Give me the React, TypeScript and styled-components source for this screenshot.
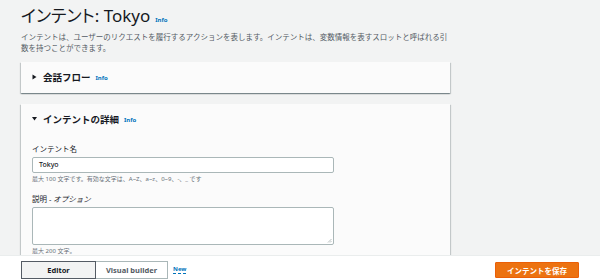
import React from 'react';
import styled, {createGlobalStyle} from 'styled-components';

const GlobalStyle = createGlobalStyle`
    html, body {
        margin: 0;
        padding: 0;
        background: #f2f3f3;
    }
    body {
        font-family: "Noto Sans", "Noto Sans CJK JP", sans-serif;
        color: #16191f;
    }
`;

const Screen = styled.div`
    width: 600px;
    height: 280px;
    display: flex;
    flex-direction: column;
    overflow: hidden;
`;

const Main = styled.div`
    flex: 1;
    overflow: hidden;
    padding: 5px 0 0 21px;
`;

const Column = styled.div`
    width: 429px;
`;

const TitleRow = styled.div`
    display: flex;
    align-items: baseline;
    gap: 5px;
    height: 22px;
`;

const Title = styled.h1`
    margin: 0;
    font-size: 17px;
    line-height: 22px;
    font-weight: 400;
    color: #16191f;
    font-feature-settings: "palt";
`;

const Info = styled.a`
    font-size: 6px;
    font-weight: 700;
    color: #0073bb;
    text-decoration: none;
`;

const Description = styled.p`
    margin: 5px 0 0;
    font-size: 7.5px;
    line-height: 11px;
    color: #545b64;
`;

const Panel = styled.section<{ $open?: boolean }>`
    margin-top: ${p => (p.$open ? 11 : 8)}px;
    background: #fbfbfb;
    box-shadow: 0 1px 1px 0 rgba(0, 28, 36, 0.3), 1px 1px 1px 0 rgba(0, 28, 36, 0.15), -1px 1px 1px 0 rgba(0, 28, 36, 0.15);
    padding-bottom: ${p => (p.$open ? 20 : 0)}px;
`;

const PanelHeader = styled.div`
    display: flex;
    align-items: center;
    gap: 5px;
    height: 31px;
    padding: 0 0 1px 11px;
    box-sizing: border-box;
`;

const Caret = styled.svg`
    width: 5px;
    height: 6px;
    margin-right: 1px;
`;

const PanelTitle = styled.h2`
    margin: 0;
    font-size: 9.5px;
    line-height: 11px;
    font-weight: 700;
`;

const HeaderInfo = styled(Info)`
    margin-top: 2px;
`;

const PanelBody = styled.div`
    padding: 9px 0 0 11px;
`;

const Label = styled.label`
    display: block;
    font-size: 7.5px;
    line-height: 10px;
    color: #16191f;

    & > i {
        font-style: italic;
    }
`;

const TextInput = styled.div`
    margin-top: 3px;
    width: 302px;
    height: 16px;
    box-sizing: border-box;
    border: 1px solid #aab7b8;
    border-radius: 2px;
    background: #fff;
    padding: 0 6px;
    font-size: 7px;
    line-height: 14px;
    font-weight: 500;
`;

const TextArea = styled.div`
    position: relative;
    margin-top: 3px;
    width: 302px;
    height: 38px;
    box-sizing: border-box;
    border: 1px solid #aab7b8;
    border-radius: 2px;
    background: #fff;
`;

const Grip = styled.svg`
    position: absolute;
    right: 1px;
    bottom: 1px;
    width: 5px;
    height: 5px;
`;

const Hint = styled.div<{ $gap?: number }>`
    margin-top: 2px;
    margin-bottom: ${p => p.$gap ?? 0}px;
    font-size: 6px;
    line-height: 8px;
    color: #687078;
`;

const Footer = styled.footer`
    height: 25px;
    flex-shrink: 0;
    background: #fff;
    border-top: 1px solid #eaeded;
    box-sizing: border-box;
    display: flex;
    align-items: flex-start;
    padding: 5px 21px 0 21px;
`;

const Segment = styled.div`
    display: flex;
`;

const SegButton = styled.button<{ $active?: boolean }>`
    height: 18px;
    width: ${p => (p.$active ? 75 : 72)}px;
    box-sizing: border-box;
    margin: 0;
    padding: 0;
    font-family: inherit;
    font-size: 7.5px;
    font-weight: 700;
    color: ${p => (p.$active ? '#16191f' : '#545b64')};
    background: ${p => (p.$active ? '#f2f3f3' : '#fff')};
    border: ${p => (p.$active ? '1.5px solid #545b64' : '1px solid #aab7b8')};
    border-left-width: ${p => (p.$active ? 1.5 : 0)}px;
`;

const NewTag = styled.span`
    margin: 5px 0 0 5px;
    font-size: 6px;
    font-weight: 700;
    color: #0073bb;
    border-bottom: 1px dashed #0073bb;
    line-height: 7px;
`;

const Spacer = styled.div`
    flex: 1;
`;

const SaveButton = styled.button`
    margin: 1px 0 0;
    height: 16px;
    width: 84px;
    padding: 0;
    font-family: inherit;
    font-size: 7.5px;
    font-weight: 700;
    color: #fff;
    background: #ec7211;
    border: 1px solid #eb5f07;
    border-radius: 1px;
`;

const RightCaret = () => (
    <Caret viewBox="0 0 5 6"><path d="M0.5 0.5 L4.5 3 L0.5 5.5 Z" fill="#16191f"/></Caret>
);

const DownCaret = () => (
    <Caret viewBox="0 0 5 6"><path d="M0 1 L5 1 L2.5 4.5 Z" fill="#16191f"/></Caret>
);

export default function App() {
    return (
        <Screen>
            <GlobalStyle/>
            <Main>
                <Column>
                    <TitleRow>
                        <Title>インテント: Tokyo</Title>
                        <Info>Info</Info>
                    </TitleRow>
                    <Description>
                        インテントは、ユーザーのリクエストを履行するアクションを表します。インテントは、変数情報を表すスロットと呼ばれる引数を持つことができます。
                    </Description>

                    <Panel>
                        <PanelHeader>
                            <RightCaret/>
                            <PanelTitle>会話フロー</PanelTitle>
                            <HeaderInfo>Info</HeaderInfo>
                        </PanelHeader>
                    </Panel>

                    <Panel $open>
                        <PanelHeader>
                            <DownCaret/>
                            <PanelTitle>インテントの詳細</PanelTitle>
                            <HeaderInfo>Info</HeaderInfo>
                        </PanelHeader>
                        <PanelBody>
                            <Label>インテント名</Label>
                            <TextInput>Tokyo</TextInput>
                            <Hint $gap={11}>最大 100 文字です。有効な文字は、A~Z、a~z、0~9、-、_ です</Hint>
                            <Label>説明 - <i>オプション</i></Label>
                            <TextArea>
                                <Grip viewBox="0 0 5 5">
                                    <path d="M1 4.5 L4.5 1 M3 4.5 L4.5 3" stroke="#879596" strokeWidth="0.6"/>
                                </Grip>
                            </TextArea>
                            <Hint>最大 200 文字。</Hint>
                        </PanelBody>
                    </Panel>
                </Column>
            </Main>
            <Footer>
                <Segment>
                    <SegButton $active>Editor</SegButton>
                    <SegButton>Visual builder</SegButton>
                </Segment>
                <NewTag>New</NewTag>
                <Spacer/>
                <SaveButton>インテントを保存</SaveButton>
            </Footer>
        </Screen>
    );
}
